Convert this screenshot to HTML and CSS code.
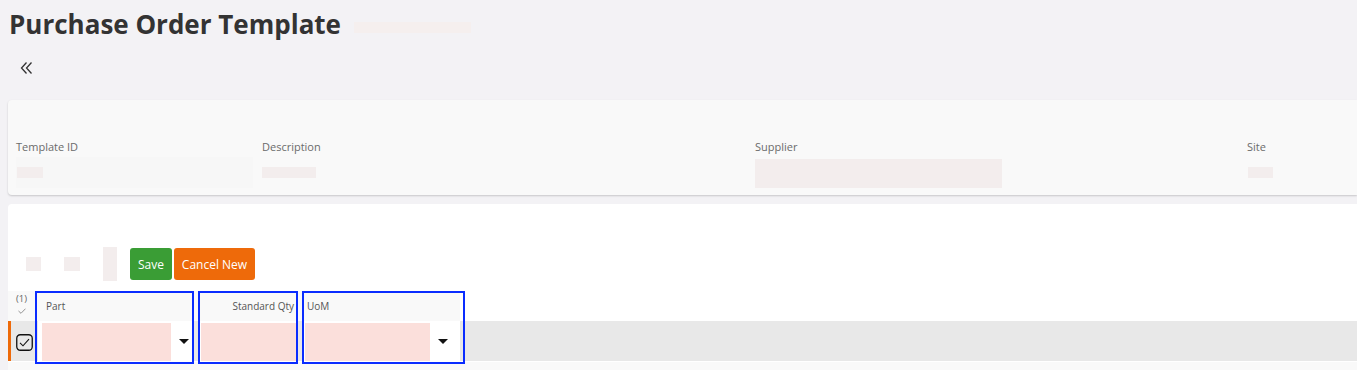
FILE: index.html
```html
<!DOCTYPE html>
<html>
<head>
<meta charset="utf-8">
<link rel="stylesheet" href="styles.css">
</head>
<body>
<header class="page-head">
  <div class="title-row">
    <h1 class="title">Purchase Order Template</h1>
    <span class="title-ph"></span>
  </div>
  <div class="back-row">
    <svg class="back-icon" width="14" height="14" viewBox="0 0 14 14">
      <path d="M6.5 1.5 L1.5 7 L6.5 12.5 M11.5 1.5 L6.5 7 L11.5 12.5" fill="none" stroke="#333" stroke-width="1.3"/>
    </svg>
  </div>
</header>

<section class="panel info">
  <div class="fields">
    <div class="field">
      <div class="label">Template ID</div>
      <div class="value faint"><span class="ph w26"></span></div>
    </div>
    <div class="field">
      <div class="label">Description</div>
      <div class="value"><span class="ph w54"></span></div>
    </div>
    <div class="field">
      <div class="label">Supplier</div>
      <div class="value"><span class="ph box"></span></div>
    </div>
    <div class="field">
      <div class="label">Site</div>
      <div class="value"><span class="ph w25"></span></div>
    </div>
  </div>
</section>

<section class="panel lines">
  <div class="toolbar">
    <span class="tb-ph sq1"></span>
    <span class="tb-ph sq2"></span>
    <span class="tb-ph tall"></span>
    <button class="btn save">Save</button>
    <button class="btn cancel">Cancel New</button>
  </div>
  <div class="grid">
    <div class="col sel">
      <div class="hcell sel-h">
        <span class="count">(1)</span>
        <svg width="8" height="6" viewBox="0 0 8 6"><path d="M0.5 3 L3 5.3 L7.5 0.7" fill="none" stroke="#888" stroke-width="0.9"/></svg>
      </div>
      <div class="dcell sel-d">
        <span class="marker"></span>
        <svg class="chk" width="17" height="17" viewBox="0 0 17 17">
          <rect x="0.75" y="0.75" width="15.5" height="15.5" rx="3.5" fill="none" stroke="#111" stroke-width="1.3"/>
          <path d="M4 8.8 L7 11.8 L13 5.2" fill="none" stroke="#111" stroke-width="1.1"/>
        </svg>
      </div>
    </div>
    <div class="col hl part">
      <div class="hcell">Part</div>
      <div class="dcell"><span class="input"></span><span class="arrow"></span></div>
    </div>
    <div class="col hl qty">
      <div class="hcell right">Standard Qty</div>
      <div class="dcell"><span class="input"></span></div>
    </div>
    <div class="col hl uom">
      <div class="hcell uom-h">UoM</div>
      <div class="dcell"><span class="input"></span><span class="arrow"></span></div>
    </div>
  </div>
</section>
</body>
</html>
```

FILE: styles.css
```css
* { box-sizing: border-box; }
html, body { margin: 0; padding: 0; }
body {
  background: #f3f2f5;
  font-family: "Open Sans", "Noto Sans", sans-serif;
  color: #333;
  overflow: hidden;
  width: 1357px;
  height: 370px;
}
.page-head { padding: 6px 0 0 9px; }
.title-row { display: flex; align-items: center; height: 36px; }
.title {
  margin: 0;
  font-size: 26px;
  line-height: 36px;
  font-weight: 700;
  color: #333;
}
.title-ph {
  display: inline-block;
  width: 117px;
  height: 11px;
  background: #f5efee;
  margin-left: 13px;
  margin-top: 6px;
}
.back-row { height: 58px; padding: 19px 0 0 11px; }
.back-icon { display: block; }

.panel { margin-left: 8px; }
.info {
  height: 95px;
  background: #f9f9f9;
  border-radius: 4px 0 0 4px;
  box-shadow: 0 1px 2px rgba(0,0,0,0.18);
  padding: 39px 0 0 8px;
  overflow: hidden;
}
.fields {
  display: grid;
  grid-template-columns: 237px 484px 483px 80px;
  column-gap: 9px;
}
.label {
  font-size: 11px;
  line-height: 16px;
  color: #6b6b6b;
  height: 18px;
}
.value { height: 31px; display: flex; align-items: center; }
.value.faint { background: #f7f7f7; }
.ph { display: block; background: #f3eded; height: 11px; }
.w26 { width: 26px; margin-left: 1px; }
.w54 { width: 54px; }
.w25 { width: 25px; margin-left: 1px; }
.ph.box { width: 247px; height: 29px; margin-top: 2px; background: #f3eded; }

.lines {
  margin-top: 9px;
  height: 166px;
  background: #fff;
  border-radius: 4px 0 0 0;
  overflow: hidden;
}
.toolbar {
  display: flex;
  align-items: center;
  padding: 43px 0 0 18px;
  height: 77px;
}
.tb-ph { display: block; background: #f3eded; }
.sq1 { width: 15px; height: 14px; }
.sq2 { width: 16px; height: 14px; margin-left: 23px; }
.tall { width: 14px; height: 34px; margin-left: 23px; }
.btn {
  border: 0;
  border-radius: 3px;
  color: #fff;
  font-family: "Open Sans", "Noto Sans", sans-serif;
  font-size: 12px;
  height: 32px;
  padding: 0;
  margin-left: 2px;
}
.save { background: #3a9d35; width: 42px; margin-left: 13px; }
.cancel { background: #ee6a0a; width: 81px; }

.grid {
  margin-top: 10px;
  display: flex;
  align-items: flex-start;
  gap: 4px;
  height: 79px;
  background-color: #fff;
  background-image:
    linear-gradient(#f9f9f9, #f9f9f9),
    linear-gradient(#e8e8e8, #e8e8e8),
    linear-gradient(#f9f9f9, #f9f9f9);
  background-repeat: no-repeat;
  background-size: 452px 30px, 100% 40px, 100% 20px;
  background-position: 0 0, 0 30px, 0 71px;
}
.col { display: flex; flex-direction: column; }
.hcell {
  height: 28px;
  font-size: 10px;
  line-height: 14px;
  color: #555;
  padding: 6px 0 0 9px;
}
.hcell.right { text-align: right; padding: 6px 2px 0 0; }
.hcell.uom-h { padding-left: 3px; }
.dcell {
  height: 40px;
  display: flex;
  background: #fff;
  padding: 2px 0 0 4px;
  margin-left: 1px;
}
.hl { border: 2px solid #0a2cff; height: 73px; }
.sel { width: 27px; height: 70px; margin-right: -4px; }
.sel-h {
  height: 30px;
  padding: 2px 0 0 0;
  display: flex;
  flex-direction: column;
  align-items: center;
  font-size: 9.5px;
  line-height: 12px;
  color: #666;
}
.sel-h svg { margin-top: 3px; }
.sel-d { background: transparent; padding: 0; margin: 0; align-items: center; }
.marker { width: 3px; height: 40px; background: #ee6a0a; }
.chk { margin-left: 5px; margin-top: 2px; }
.input { display: block; height: 38px; background: #fbdfdb; }
.part { width: 159px; }
.part .input { width: 129px; }
.qty { width: 100px; }
.qty .input { width: 96px; }
.qty .dcell { margin-left: 0; padding-left: 1px; }
.uom { width: 163px; }
.uom .input { width: 125px; }
.uom .dcell { width: 156px; margin-left: 0; padding-left: 1px; }
.arrow {
  width: 0; height: 0;
  border-left: 5px solid transparent;
  border-right: 5px solid transparent;
  border-top: 5px solid #111;
  margin: 16px 0 0 8px;
}
```
